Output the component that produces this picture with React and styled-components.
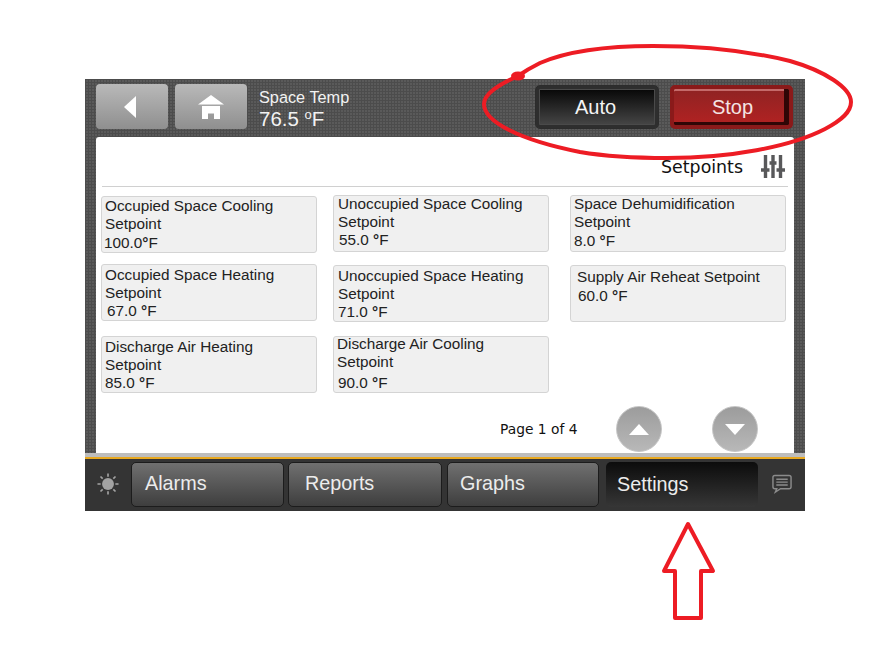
import React from 'react';
import styled, { createGlobalStyle } from 'styled-components';

const setpoints = [
  { id: 1, title: 'Occupied Space Cooling', value: '100.0', tight: true, top: 1, lift: 0, drop: 1, x: 3, vx: 2 },
  { id: 2, title: 'Unoccupied Space Cooling', value: '55.0', top: 0, lift: -1, drop: 0, x: 4, vx: 5 },
  { id: 3, title: 'Space Dehumidification', value: '8.0', top: 0, lift: -1, drop: 1, x: 3, vx: 3 },
  { id: 4, title: 'Occupied Space Heating', value: '67.0', top: 0, lift: 1, drop: 0, x: 3, vx: 5 },
  { id: 5, title: 'Unoccupied Space Heating', value: '71.0', top: 1, lift: 1, drop: 0, x: 4, vx: 4 },
  { id: 6, title: 'Supply Air Reheat Setpoint', value: '60.0', top: 1, lift: 2, drop: 1, x: 6, vx: 7, single: true },
  { id: 7, title: 'Discharge Air Heating', value: '85.0', top: 0, lift: 1, drop: 0, x: 3, vx: 3 },
  { id: 8, title: 'Discharge Air Cooling', value: '90.0', top: 0, lift: -2, drop: 3, x: 3, vx: 4 },
];

const tabs = [
  { name: 'Alarms', width: 153, gap: 0, pad: 13 },
  { name: 'Reports', width: 154, gap: 4, pad: 16 },
  { name: 'Graphs', width: 152, gap: 5, pad: 12 },
  { name: 'Settings', width: 152, gap: 7, pad: 11, active: true },
];

function App() {
  return (
    <Page>
      <GlobalStyle />
      <Frame>
        <Header>
          <NavButton aria-label="Back">
            <BackIcon width="12" height="22" viewBox="0 0 12 22"><path d="M12 0V22L0 11Z" fill="#fff" /></BackIcon>
          </NavButton>
          <NavButton aria-label="Home">
            <svg width="26" height="24" viewBox="0 0 26 24"><path d="M13 0L26 9.500H0Z M4 11H22V24H16V18.500H10V24H4Z" fill="#fff" /></svg>
          </NavButton>
          <Reading>
            <ReadingLabel>Space Temp</ReadingLabel>
            <ReadingValue>76.5 <sup>o</sup>F</ReadingValue>
          </Reading>
          <AutoButton>Auto</AutoButton>
          <StopButton>Stop</StopButton>
        </Header>

        <Panel>
          <TitleRow>
            <Title>Setpoints</Title>
            <svg width="24" height="23" viewBox="0 0 24 23">
              <g fill="none" stroke="#58585a" strokeWidth="3.400">
                <path d="M4.500 0V23M12 0V23M19.500 0V23" />
                <path d="M0 15H8.500M8.500 8H15.500M15.500 15H24" />
              </g>
            </svg>
          </TitleRow>

          <CardGrid>
            {setpoints.map((s) => (
              <Card key={s.id} $top={s.top} $x={s.x}>
                <CardTitle $lift={s.lift}>{s.title}</CardTitle>
                {!s.single && <div>Setpoint</div>}
                <CardValue $x={s.vx - s.x} $drop={s.drop}>
                  {s.value}{s.tight ? '' : ' '}<Deg>°</Deg>F
                </CardValue>
              </Card>
            ))}
          </CardGrid>

          <Pager>
            <PageText>Page 1 of 4</PageText>
            <RoundButton aria-label="Previous page" $gap={38}>
              <svg width="20" height="11" viewBox="0 0 20 11"><path d="M10 0L20 11H0Z" fill="#fff" /></svg>
            </RoundButton>
            <RoundButton aria-label="Next page" $gap={50}>
              <svg width="20" height="11" viewBox="0 0 20 11"><path d="M10 11L20 0H0Z" fill="#fff" /></svg>
            </RoundButton>
          </Pager>
        </Panel>

        <Footer>
          <FooterIcon $width={46}>
            <svg width="22" height="22" viewBox="0 0 24 24">
              <circle cx="12" cy="12" r="6.500" fill="#a2a2a2" />
              <path d="M12 0.500V4M12 20V23.500M0.500 12H4M20 12H23.500M3.800 3.800L6.200 6.200M17.800 17.800L20.200 20.200M3.800 20.200L6.200 17.800M17.800 6.200L20.200 3.800" stroke="#a2a2a2" strokeWidth="1.800" />
            </svg>
          </FooterIcon>
          <Tabs>
            {tabs.map((t) => (
              <Tab key={t.name} $width={t.width} $gap={t.gap} $pad={t.pad} $active={t.active}>{t.name}</Tab>
            ))}
          </Tabs>
          <FooterIcon $width={47}>
            <svg width="20" height="20" viewBox="0 0 21 20" fill="none" stroke="#8b8b8b" strokeWidth="1.500">
              <path d="M3 1H18Q20 1 20 3V13Q20 15 18 15H9L3.500 18.500L5 15H3Q1 15 1 13V3Q1 1 3 1Z" />
              <path d="M4.500 5H16.500M4.500 8H16.500M4.500 11H16.500" />
            </svg>
          </FooterIcon>
        </Footer>
      </Frame>

      <Annotations width="886" height="662" viewBox="0 0 886 662">
        <g fill="none" stroke="#ed1c24" strokeWidth="4">
          <path d="M518 76C498 85 484 94 484 104C484 122 520 140 580 152C610 157 640 158 667 158C730 158 790 147 825 129C842 120 851 112 851 102C851 88 825 71 790 61C745 50 700 46 653 46C610 46 570 50 540 63C532 67 525 71 518 76Z" />
          <path d="M688 524L713 571H701V618H675V571H664Z" strokeLinejoin="round" />
        </g>
        <ellipse cx="518" cy="76" rx="7" ry="4.500" fill="#ed1c24" />
      </Annotations>
    </Page>
  );
}

export default App;

const GlobalStyle = createGlobalStyle`
  body {
    margin: 0;
    background: #fff;
    font-family: "Liberation Sans", Arial, sans-serif;
  }
`

const Page = styled.div`
  position: relative;
  width: 886px;
  height: 662px;
  padding: 79px 0 0 85px;
  box-sizing: border-box;
  overflow: hidden;
`

const Frame = styled.div`
  display: flex;
  flex-direction: column;
  width: 720px;
  height: 432px;
  background-color: #5a5a5a;
  background-image:
    linear-gradient(#4c4c4c 1px, transparent 1px),
    linear-gradient(90deg, #4c4c4c 1px, transparent 1px);
  background-size: 3px 3px;
`

const Header = styled.div`
  display: flex;
  align-items: flex-start;
  height: 58px;
  padding: 5px 12px 0 11px;
  box-sizing: border-box;
`

const NavButton = styled.div`
  display: flex;
  align-items: center;
  justify-content: center;
  width: 72px;
  height: 45px;
  margin-right: 7px;
  border-radius: 4px;
  background: linear-gradient(#b9b9b9, #8f8f8f);
`

const BackIcon = styled.svg`
  margin-left: -4px;
`

const Reading = styled.div`
  flex: 1;
  margin-left: 5px;
  color: #f2f2f2;
`

const ReadingLabel = styled.div`
  font-size: 16.300px;
  line-height: 18px;
  margin-top: 4px;
`

const ReadingValue = styled.div`
  margin-top: 1px;
  font-size: 20.500px;
  line-height: 23px;

  sup {
    font-size: 13px;
    line-height: 0;
    vertical-align: 7px;
  }
`

const AutoButton = styled.div`
  display: flex;
  align-items: center;
  justify-content: center;
  width: 124px;
  height: 44px;
  margin-top: 1px;
  padding-right: 3px;
  box-sizing: border-box;
  border: 1px solid #2c2c2c;
  border-radius: 5px;
  box-shadow: inset 0 0 0 3px #2e2e2e, inset 0 0 0 4px #4a4a4a;
  background: linear-gradient(#020202, #4b4b4b);
  color: #f4f4f4;
  font-size: 20px;
`

const StopButton = styled.div`
  display: flex;
  align-items: center;
  justify-content: center;
  width: 123px;
  height: 44px;
  margin: 1px 0 0 11px;
  padding-left: 2px;
  box-sizing: border-box;
  border: 4px solid #8a1a1a;
  border-radius: 5px;
  box-shadow: inset -5px -3px 0 #2f0606, inset 0 2px 0 #c56a6a;
  background: linear-gradient(#8f2323, #b22222);
  color: #f4e4e4;
  font-size: 20px;
`

const Panel = styled.div`
  flex: 1;
  display: flex;
  flex-direction: column;
  margin: 0 11px;
  background: #fff;
  border-radius: 3px 3px 0 0;
  overflow: hidden;
`

const TitleRow = styled.div`
  display: flex;
  align-items: center;
  justify-content: flex-end;
  gap: 18px;
  height: 50px;
  margin: 0 6px;
  padding: 10px 3px 0 0;
  box-sizing: border-box;
  border-bottom: 1px solid #d0d0d0;
`

const Title = styled.div`
  font-family: "DejaVu Sans", sans-serif;
  font-size: 17.400px;
  color: #111;
`

const CardGrid = styled.div`
  display: grid;
  grid-template-columns: 232px 237px 216px;
  grid-template-rows: 69px 72px 65px;
  align-items: start;
  margin-top: 8px;
  padding-left: 5px;
`

const Card = styled.div`
  width: 216px;
  height: 57px;
  margin-top: ${(p) => p.$top}px;
  padding-left: ${(p) => p.$x}px;
  box-sizing: border-box;
  border: 1px solid #d4d4d4;
  border-radius: 3px;
  background: #f0f0f0;
  color: #222;
  font-size: 15.300px;
  line-height: 18px;
  white-space: nowrap;
`

const CardTitle = styled.div`
  margin-top: ${(p) => p.$lift}px;
`

const CardValue = styled.div`
  margin-left: ${(p) => p.$x}px;
  margin-top: ${(p) => p.$drop}px;
`

const Deg = styled.span`
  font-weight: bold;
`

const Pager = styled.div`
  flex: 1;
  display: flex;
  align-items: center;
  padding: 4px 0 0 404px;
`

const PageText = styled.div`
  font-family: "DejaVu Sans", sans-serif;
  font-size: 13.800px;
  color: #111;
  white-space: nowrap;
  width: 78px;
`

const RoundButton = styled.div`
  display: flex;
  align-items: center;
  justify-content: center;
  flex: none;
  width: 46px;
  height: 46px;
  margin-left: ${(p) => p.$gap}px;
  box-sizing: border-box;
  border: 1px solid #c4c4c4;
  border-radius: 50%;
  background: linear-gradient(#9c9c9c, #b8b8b8);
`

const Footer = styled.div`
  display: flex;
  align-items: center;
  height: 58px;
  box-sizing: border-box;
  border-top: 4px solid #bdbdbd;
  background: #343434;
  box-shadow: inset 0 2px 0 #e8a820;
`

const FooterIcon = styled.div`
  display: flex;
  flex: none;
  align-items: center;
  justify-content: center;
  width: ${(p) => p.$width}px;
  height: 100%;
`

const Tabs = styled.div`
  display: flex;
  margin-top: 1px;
`

const Tab = styled.div`
  display: flex;
  align-items: center;
  width: ${(p) => p.$width}px;
  height: 45px;
  margin-left: ${(p) => p.$gap}px;
  padding-left: ${(p) => p.$pad}px;
  padding-bottom: ${(p) => (p.$active ? 0 : 2)}px;
  box-sizing: border-box;
  border: 1px solid ${(p) => (p.$active ? '#0c0c0c #666 #777 #333' : '#1c1c1c')};
  border-radius: 5px;
  background: ${(p) => (p.$active ? 'linear-gradient(#0c0c0c, #363636)' : 'linear-gradient(#707070, #3e3e3e)')};
  color: #ececec;
  font-size: 19.800px;
`

const Annotations = styled.svg`
  position: absolute;
  top: 0;
  left: 0;
  pointer-events: none;
`
